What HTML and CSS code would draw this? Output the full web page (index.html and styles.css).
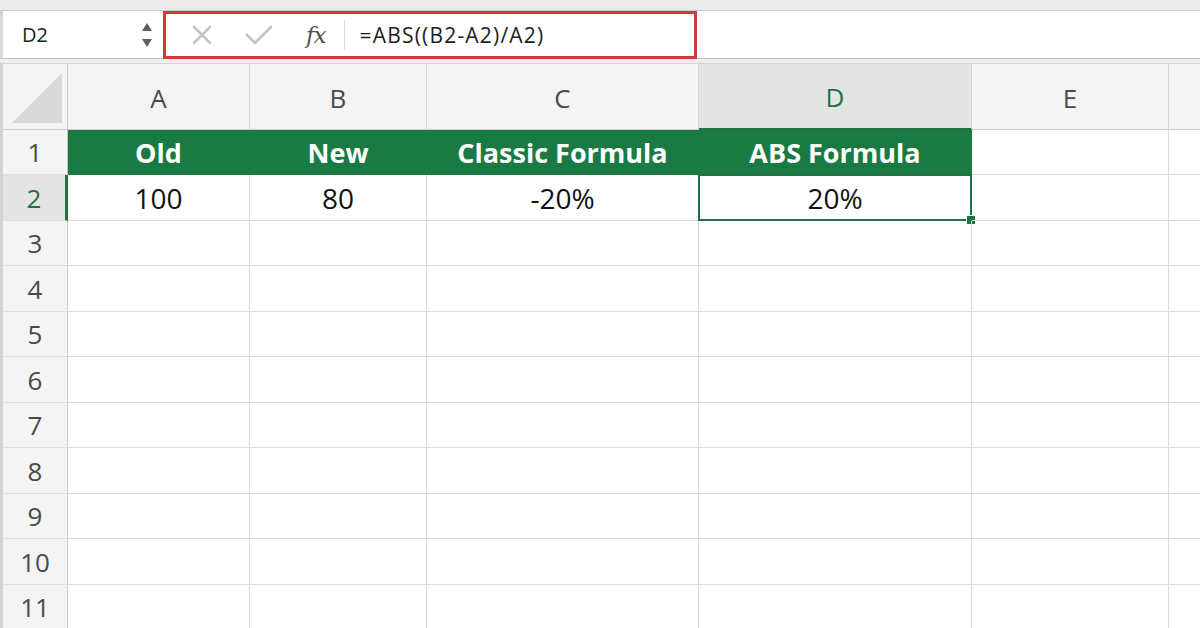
FILE: index.html
```html
<!DOCTYPE html>
<html>
<head>
<meta charset="utf-8">
<link rel="stylesheet" href="styles.css">
</head>
<body>
<div class="app">
  <div class="topstrip"></div>
  <div class="fbar">
    <div class="namebox">
      <span class="ref">D2</span>
      <svg class="spin" width="12" height="26" viewBox="0 0 12 26"><path d="M6 1 L11 9 L1 9 Z" fill="#5f5f5f"/><path d="M1 17 L11 17 L6 25 Z" fill="#5f5f5f"/></svg>
    </div>
    <div class="fbox">
      <svg class="ico-x" width="22" height="22" viewBox="0 0 22 22"><path d="M3 3 L19 19 M19 3 L3 19" stroke="#c4c4c4" stroke-width="2.6" stroke-linecap="round"/></svg>
      <svg class="ico-check" width="28" height="20" viewBox="0 0 28 20"><path d="M2 10 L10 18 L26 2" stroke="#c4c4c4" stroke-width="2.6" fill="none" stroke-linecap="round" stroke-linejoin="round"/></svg>
      <span class="fx">fx</span>
      <span class="sep"></span>
      <span class="formula">=ABS((B2-A2)/A2)</span>
    </div>
    <div class="rest"></div>
  </div>
  <div class="gapstrip"></div>
  <div class="sheet">
    <div class="corner"><svg width="52" height="52" viewBox="0 0 52 52"><path d="M51 1 L51 51 L1 51 Z" fill="#d9d9d9"/></svg></div>
    <div class="ch">A</div><div class="ch">B</div><div class="ch">C</div><div class="ch sel">D</div><div class="ch">E</div><div class="ch last"></div>

    <div class="rh">1</div>
    <div class="c hd">Old</div><div class="c hd">New</div><div class="c hd">Classic Formula</div><div class="c hd">ABS Formula</div><div class="c"></div><div class="c last"></div>

    <div class="rh sel">2</div>
    <div class="c">100</div><div class="c">80</div><div class="c">-20%</div><div class="c active">20%<span class="handle"></span></div><div class="c"></div><div class="c last"></div>

    <div class="rh">3</div><div class="c"></div><div class="c"></div><div class="c"></div><div class="c"></div><div class="c"></div><div class="c last"></div>
    <div class="rh">4</div><div class="c"></div><div class="c"></div><div class="c"></div><div class="c"></div><div class="c"></div><div class="c last"></div>
    <div class="rh">5</div><div class="c"></div><div class="c"></div><div class="c"></div><div class="c"></div><div class="c"></div><div class="c last"></div>
    <div class="rh">6</div><div class="c"></div><div class="c"></div><div class="c"></div><div class="c"></div><div class="c"></div><div class="c last"></div>
    <div class="rh">7</div><div class="c"></div><div class="c"></div><div class="c"></div><div class="c"></div><div class="c"></div><div class="c last"></div>
    <div class="rh">8</div><div class="c"></div><div class="c"></div><div class="c"></div><div class="c"></div><div class="c"></div><div class="c last"></div>
    <div class="rh">9</div><div class="c"></div><div class="c"></div><div class="c"></div><div class="c"></div><div class="c"></div><div class="c last"></div>
    <div class="rh">10</div><div class="c"></div><div class="c"></div><div class="c"></div><div class="c"></div><div class="c"></div><div class="c last"></div>
    <div class="rh">11</div><div class="c"></div><div class="c"></div><div class="c"></div><div class="c"></div><div class="c"></div><div class="c last"></div>
  </div>
</div>
</body>
</html>
```

FILE: styles.css
```css
* { box-sizing: border-box; }
html, body { margin: 0; padding: 0; }
body {
  width: 1200px;
  height: 628px;
  overflow: hidden;
  background: #ffffff;
  font-family: "Open Sans", "Liberation Sans", sans-serif;
}
.app { width: 1200px; height: 628px; overflow: hidden; }

.topstrip {
  height: 11px;
  background: #ebebeb;
  border-bottom: 1px solid #cbcbcb;
}
.fbar {
  display: flex;
  height: 48px;
  background: #ffffff;
  border-bottom: 1px solid #c4c4c4;
  border-left: 3px solid #d6d6d6;
}
.namebox {
  width: 160px;
  display: flex;
  align-items: center;
  justify-content: space-between;
  padding: 0 10px 0 19px;
}
.ref {
  font-size: 20px;
  color: #1e1e1e;
}
.spin { display: block; }
.fbox {
  width: 534px;
  height: 48px;
  border: 3px solid #d2393b;
  display: flex;
  align-items: center;
  position: relative;
  z-index: 2;
  margin-bottom: -1px;
}
.ico-x { margin-left: 25px; }
.ico-check { margin-left: 32px; }
.fx {
  margin-left: 33px;
  font-family: "DejaVu Serif", "Liberation Serif", serif;
  font-style: italic;
  font-size: 23px;
  color: #505050;
  letter-spacing: -1px;
}
.sep {
  width: 1px;
  height: 30px;
  background: #d9d9d9;
  margin-left: 19px;
}
.formula {
  margin-left: 14px;
  font-size: 21px;
  letter-spacing: 1.2px;
  color: #1e1e1e;
}
.rest { flex: 1; }

.gapstrip {
  height: 5px;
  background: #eeeeee;
  border-bottom: 1px solid #d4d4d4;
}

.sheet {
  display: grid;
  grid-template-columns: 65px 182px 177px 272px 273px 197px 31px;
  grid-template-rows: 66px 45px 46px 45px 46px 45px 46px 45px 46px 45px 46px 45px;
  border-left: 3px solid #d3d3d3;
}
.corner {
  background: #f4f4f4;
  border-right: 1px solid #c6c6c6;
  border-bottom: 1px solid #cdcdcd;
  display: flex;
  align-items: flex-end;
  justify-content: flex-end;
  padding: 0 4px 5px 0;
}
.corner svg { display: block; }
.ch {
  background: #f4f4f4;
  border-right: 1px solid #d6d6d6;
  border-bottom: 1px solid #cdcdcd;
  display: flex;
  align-items: center;
  justify-content: center;
  font-size: 26px;
  color: #4a4a4a;
  padding-top: 2px;
}
.ch.sel { background: #e4e4e4; color: #1f7244; border-bottom: 2px solid #1f7244; }
.ch.last { border-right: none; }
.rh {
  background: #f4f4f4;
  border-right: 1px solid #c6c6c6;
  border-bottom: 1px solid #dedede;
  display: flex;
  align-items: center;
  justify-content: center;
  font-size: 26px;
  color: #4a4a4a;
}
.rh.sel {
  background: #e4e4e4;
  color: #1f7244;
  border-right: 3px solid #1f7244;
}
.c {
  border-right: 1px solid #d9d9d9;
  border-bottom: 1px solid #d9d9d9;
  display: flex;
  align-items: center;
  justify-content: center;
  font-size: 28px;
  color: #111111;
  position: relative;
}
.c.last { border-right: none; }
.c.hd {
  background: #197b43;
  border-color: #197b43;
  color: #ffffff;
  font-weight: 700;
  font-size: 27px;
}
.c.active {
  border: 2px solid #1f7244;
  margin-left: -1px;
  margin-top: -1px;
}
.handle {
  position: absolute;
  right: -6px;
  bottom: -6px;
  width: 10px;
  height: 10px;
  background: #1f7244;
  border: 1px solid #ffffff;
}
```
